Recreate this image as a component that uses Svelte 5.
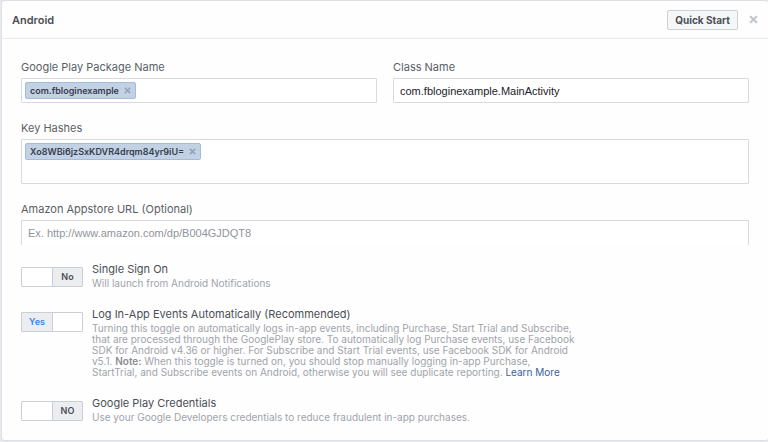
<script lang="ts">
	type Setting = {
		id: string;
		title: string;
		enabled: boolean;
		offText: string;
	};

	let packageNames = $state(['com.fbloginexample']);
	let keyHashes = $state(['Xo8WBi6jzSxKDVR4drqm84yr9iU=']);
	let className = $state('com.fbloginexample.MainActivity');
	let amazonUrl = $state('');

	let settings: Setting[] = $state([
		{ id: 'sso', title: 'Single Sign On', enabled: false, offText: 'No' },
		{
			id: 'events',
			title: 'Log In-App Events Automatically (Recommended)',
			enabled: true,
			offText: 'No'
		},
		{ id: 'credentials', title: 'Google Play Credentials', enabled: false, offText: 'NO' }
	]);

	// Enter turns the typed text into a new token
	function addToken(event: KeyboardEvent, list: string[]) {
		if (event.key !== 'Enter') return;
		const input = event.currentTarget as HTMLInputElement;
		if (input.value.trim()) list.push(input.value.trim());
		input.value = '';
	}
</script>

{#snippet cross()}
	<svg class="cross" viewBox="0 0 8 8" aria-hidden="true">
		<path d="M1 1l6 6M7 1L1 7" />
	</svg>
{/snippet}

{#snippet tokenField(id: string, list: string[], tall: boolean)}
	<div class="control tokens" class:tall>
		{#each list as token, i (token)}
			<span class="token">
				{token}
				<button type="button" aria-label="Remove {token}" onclick={() => list.splice(i, 1)}>
					{@render cross()}
				</button>
			</span>
		{/each}
		<input {id} type="text" onkeydown={(e) => addToken(e, list)} />
	</div>
{/snippet}

<section class="card">
	<header>
		<h2>Android</h2>
		<button type="button" class="quick-start">Quick Start</button>
		<button type="button" class="close" aria-label="Close">{@render cross()}</button>
	</header>

	<form class="body">
		<div class="columns">
			<div class="field">
				<label for="package">Google Play Package Name</label>
				{@render tokenField('package', packageNames, false)}
			</div>
			<div class="field">
				<label for="class-name">Class Name</label>
				<input id="class-name" class="control text" type="text" bind:value={className} />
			</div>
		</div>

		<div class="field">
			<label for="hashes">Key Hashes</label>
			{@render tokenField('hashes', keyHashes, true)}
		</div>

		<div class="field">
			<label for="amazon">Amazon Appstore URL (Optional)</label>
			<input
				id="amazon"
				class="control text open"
				type="text"
				placeholder="Ex. http://www.amazon.com/dp/B004GJDQT8"
				bind:value={amazonUrl}
			/>
		</div>

		<div class="settings">
			{#each settings as setting (setting.id)}
				<div class="setting">
					<label class="toggle" class:on={setting.enabled}>
						<input
							type="checkbox"
							aria-labelledby="{setting.id}-title"
							bind:checked={setting.enabled}
						/>
						<span>{setting.enabled ? 'Yes' : setting.offText}</span>
					</label>
					<div class="info">
						<h3 id="{setting.id}-title">{setting.title}</h3>
						{#if setting.id === 'sso'}
							<p>Will launch from Android Notifications</p>
						{:else if setting.id === 'events'}
							<p>
								Turning this toggle on automatically logs in-app events, including Purchase, Start
								Trial and Subscribe, that are processed through the GooglePlay store. To
								automatically log Purchase events, use Facebook SDK for Android v4.36 or higher. For
								Subscribe and Start Trial events, use Facebook SDK for Android v5.1.
								<strong>Note:</strong> When this toggle is turned on, you should stop manually logging
								in-app Purchase, StartTrial, and Subscribe events on Android, otherwise you will see
								duplicate reporting. <a href="#learn-more">Learn More</a>
							</p>
						{:else}
							<p>Use your Google Developers credentials to reduce fraudulent in-app purchases.</p>
						{/if}
					</div>
				</div>
			{/each}
		</div>
	</form>
</section>

<style>
	:global(body) {
		background: #e9eaf0;
		font-family: Inter, sans-serif;
		color: #4b4f56;
	}
	.card {
		margin-left: 1px;
		border: 1px solid #dddfe4;
		border-right: 0;
		border-radius: 3px;
		background: #fefefe;
	}
	h2,
	h3,
	p {
		margin: 0;
	}
	input,
	button {
		box-sizing: border-box;
		font-family: inherit;
	}

	header {
		display: flex;
		align-items: center;
		height: 37px;
		padding: 0 10px;
		border-bottom: 1px solid #e9eaed;
	}
	h2 {
		flex: 1;
		font-size: 11px;
		font-weight: 600;
	}
	.quick-start {
		height: 20px;
		padding: 0 7px;
		border: 1px solid #ced0d4;
		border-radius: 2px;
		background: #f5f6f7;
		color: #4b4f56;
		font-size: 10px;
		font-weight: 700;
		line-height: 18px;
	}
	.close {
		display: flex;
		margin-left: 11px;
		padding: 0;
		border: 0;
		background: none;
		color: #bec2c9;
	}
	.close .cross {
		width: 9px;
		height: 9px;
	}
	.cross {
		display: block;
		width: 7px;
		height: 7px;
		fill: none;
		stroke: currentColor;
		stroke-width: 1.8;
	}

	.body {
		display: flex;
		flex-direction: column;
		gap: 17px;
		padding: 20px 19px 17px;
	}
	.columns {
		display: grid;
		grid-template-columns: 1fr 1fr;
		gap: 16px;
	}
	.field {
		display: flex;
		flex-direction: column;
		gap: 3px;
	}
	.field label {
		color: #5a5e66;
		font-size: 11px;
		line-height: 16px;
	}
	.control {
		box-sizing: border-box;
		width: 100%;
		min-height: 25px;
		border: 1px solid #d8dae0;
		border-radius: 1px;
		background: #fff;
	}
	.text {
		padding: 0 6px;
		color: #1d2129;
		font-family: 'Liberation Sans', Arial, sans-serif;
		font-size: 11px;
	}
	.text::placeholder {
		color: #90949c;
	}
	.open {
		border-bottom: 0;
	}

	.tokens {
		display: flex;
		align-items: flex-start;
		gap: 4px;
		padding: 3px;
	}
	.tall {
		min-height: 45px;
	}
	.tokens input {
		flex: 1;
		min-width: 0;
		height: 17px;
		padding: 0;
		border: 0;
		outline: 0;
		background: none;
		font-size: 10px;
	}
	.token {
		display: flex;
		align-items: center;
		gap: 5px;
		box-sizing: border-box;
		height: 17px;
		padding: 0 4px;
		border: 1px solid #a3bbdc;
		border-radius: 2px;
		background: #c3d1e5;
		color: #373e4d;
		font-size: 9px;
		font-weight: 600;
	}
	.token button {
		padding: 0;
		border: 0;
		background: none;
		color: #96a3b7;
	}

	.settings {
		display: flex;
		flex-direction: column;
		gap: 18px;
	}
	.setting {
		display: flex;
		align-items: flex-start;
		gap: 9px;
	}
	.toggle {
		display: flex;
		flex: none;
		justify-content: flex-end;
		box-sizing: border-box;
		width: 62px;
		height: 20px;
		margin-top: 5px;
		border: 1px solid #ccced3;
		border-radius: 1px;
		background: #fff;
		cursor: pointer;
	}
	.toggle input {
		appearance: none;
		flex: 1;
		margin: 0;
		cursor: pointer;
	}
	.toggle span {
		width: 29px;
		border-left: 1px solid #ccced3;
		background: #ebedf1;
		font-size: 9px;
		font-weight: 600;
		line-height: 18px;
		text-align: center;
	}
	.toggle.on {
		flex-direction: row-reverse;
	}
	.toggle.on span {
		width: 30px;
		border-right: 1px solid #ccced3;
		border-left: 0;
		color: #3b82ee;
	}
	.info {
		max-width: 486px;
	}
	h3 {
		margin-bottom: 2px;
		font-size: 11px;
		font-weight: 400;
		line-height: 14px;
	}
	p {
		color: #a0a3aa;
		font-size: 10px;
		line-height: 11px;
	}
	strong {
		color: #8a8d94;
		font-weight: 600;
	}
	a {
		color: #3b5fa0;
		text-decoration: none;
	}
</style>
